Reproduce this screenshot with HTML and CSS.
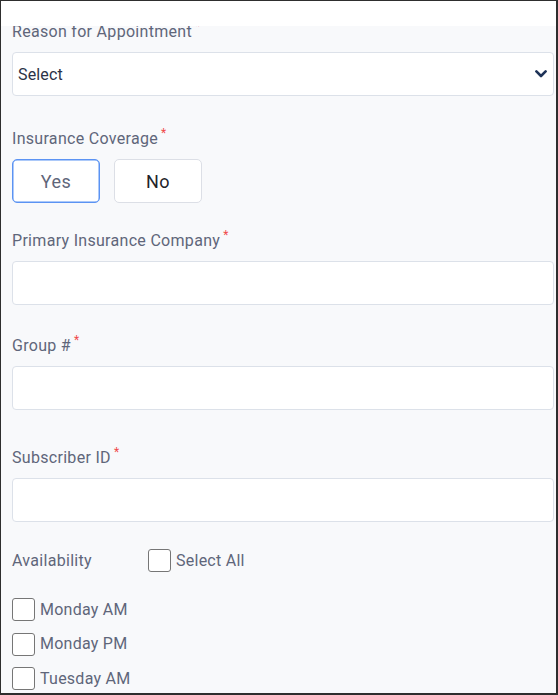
FILE: index.html
```html
<!DOCTYPE html>
<html lang="en">
<head>
<meta charset="utf-8">
<title>Appointment Form</title>
<link rel="stylesheet" href="styles.css">
</head>
<body>
<div class="frame">
  <div class="top-cover"></div>
  <form class="form">
    <div class="field">
      <label class="label">Reason for Appointment<span class="req">*</span></label>
      <div class="select">
        <span class="select-text">Select</span>
        <svg class="chev" width="12" height="8" viewBox="0 0 12 8"><path d="M1.4 1.4 L6 6 L10.6 1.4" fill="none" stroke="#1e3358" stroke-width="2.6" stroke-linecap="round" stroke-linejoin="round"/></svg>
      </div>
    </div>

    <div class="field f-coverage">
      <label class="label">Insurance Coverage<span class="req">*</span></label>
      <div class="toggle">
        <button type="button" class="tbtn tbtn-active">Yes</button>
        <button type="button" class="tbtn">No</button>
      </div>
    </div>

    <div class="field f-primary">
      <label class="label">Primary Insurance Company<span class="req">*</span></label>
      <div class="input"></div>
    </div>

    <div class="field f-group">
      <label class="label">Group #<span class="req">*</span></label>
      <div class="input"></div>
    </div>

    <div class="field f-subscriber">
      <label class="label">Subscriber ID<span class="req">*</span></label>
      <div class="input"></div>
    </div>

    <div class="avail-row">
      <span class="label avail-label">Availability</span>
      <span class="check-item"><span class="box"></span><span class="check-text">Select All</span></span>
    </div>

    <div class="check-list">
      <span class="check-item"><span class="box"></span><span class="check-text">Monday AM</span></span>
      <span class="check-item"><span class="box"></span><span class="check-text">Monday PM</span></span>
      <span class="check-item"><span class="box"></span><span class="check-text">Tuesday AM</span></span>
    </div>
  </form>
</div>
</body>
</html>
```

FILE: styles.css
```css
* { box-sizing: border-box; }

html, body {
  margin: 0;
  padding: 0;
  background: #ffffff;
}

body {
  font-family: Roboto, "Liberation Sans", Arial, sans-serif;
}

.frame {
  position: relative;
  width: 558px;
  height: 695px;
  border: 1px solid #2e2e2e;
  border-right-width: 2px;
  border-bottom-width: 2px;
  background: #f8f9fb;
  overflow: hidden;
  padding: 21px 2px 0 11px;
}

.top-cover {
  position: absolute;
  top: 0;
  left: 0;
  right: 0;
  height: 25px;
  background: #ffffff;
  z-index: 2;
}

.form {
  display: flex;
  flex-direction: column;
  margin: 0;
}

.field {
  display: flex;
  flex-direction: column;
}

.f-coverage { margin-top: 33px; }
.f-primary { margin-top: 28px; }
.f-group { margin-top: 31px; }
.f-subscriber { margin-top: 38px; }

.label {
  display: block;
  font-size: 16px;
  line-height: 20px;
  height: 20px;
  letter-spacing: 0.3px;
  color: #5f667a;
  margin-bottom: 10px;
  white-space: nowrap;
}

.req {
  color: #f04a4a;
  font-size: 12px;
  line-height: 8px;
  vertical-align: top;
  margin-left: 3px;
  letter-spacing: 0;
}

.select {
  height: 44px;
  background: #ffffff;
  border: 1px solid #dce1e9;
  border-radius: 4px;
  display: flex;
  align-items: center;
  justify-content: space-between;
  padding: 0 6px 0 5px;
}

.select-text {
  font-size: 16px;
  letter-spacing: 0.15px;
  color: #2b3246;
}

.chev { display: block; }

.toggle {
  display: flex;
  gap: 14px;
}

.tbtn {
  width: 88px;
  height: 44px;
  background: #ffffff;
  border: 1px solid #dcdfe6;
  border-radius: 5px;
  font-family: Roboto, "Liberation Sans", Arial, sans-serif;
  font-size: 18px;
  letter-spacing: 0.4px;
  color: #1f2329;
  padding: 0;
}

.tbtn-active {
  border-color: #5b93f3;
  box-shadow: inset 0 0 0 0.5px #5b93f3;
  color: #5f667a;
}

.input {
  height: 44px;
  background: #ffffff;
  border: 1px solid #dce1e9;
  border-radius: 4px;
}

.avail-row {
  margin-top: 27px;
  display: flex;
  align-items: center;
  height: 23px;
}

.avail-label {
  width: 136px;
  margin-bottom: 0;
}

.check-list {
  margin-top: 26px;
  display: flex;
  flex-direction: column;
  gap: 11.5px;
}

.check-item {
  display: flex;
  align-items: center;
  gap: 5px;
  height: 23px;
}

.box {
  width: 23px;
  height: 23px;
  border: 1.5px solid #767676;
  border-radius: 3px;
  background: #ffffff;
  flex: none;
}

.check-text {
  font-size: 16px;
  line-height: 20px;
  letter-spacing: 0.25px;
  color: #5f667a;
}
```
